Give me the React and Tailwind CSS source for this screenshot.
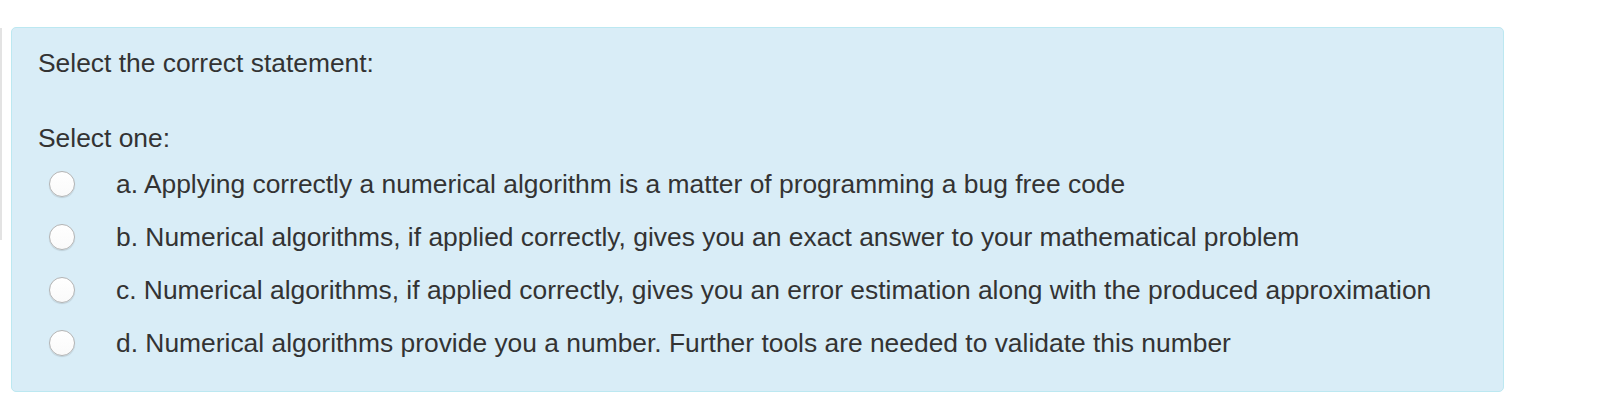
import React from 'react';

const options = [
  'a. Applying correctly a numerical algorithm is a matter of programming a bug free code',
  'b. Numerical algorithms, if applied correctly, gives you an exact answer to your mathematical problem',
  'c. Numerical algorithms, if applied correctly, gives you an error estimation along with the produced approximation',
  'd. Numerical algorithms provide you a number. Further tools are needed to validate this number',
];

const App = () => {
  return (
    <div className="relative w-[1606px] h-[412px] bg-white pt-[27px] pl-[11px]" style={{ fontFamily: '"Liberation Sans", Arial, sans-serif' }}>
      {/* edge of the page column behind the box */}
      <div className="absolute left-0 top-[28px] w-[2px] h-[212px] bg-[#e3e3e3]" />

      <div className="w-[1493px] h-[365px] rounded-[5px] border border-[#bce8f1] bg-[#d9edf7] pt-[18px] pl-[26px] text-[26.4px] text-[#333]">
        <div className="h-[34px] leading-[34px]">Select the correct statement:</div>

        <div className="mt-[41px] h-[34px] leading-[34px]">Select one:</div>

        <div className="mt-[2px] flex flex-col">
          {options.map((text) => (
            <label key={text} className="flex items-center h-[53px] cursor-pointer">
              <span className="ml-[11px] w-[26px] h-[26px] shrink-0 rounded-full border border-[#b4b4b4] bg-gradient-to-b from-white to-[#fafafa] shadow-[0_1px_1px_rgba(0,0,0,0.12)]" />
              <span className="ml-[41px] leading-[34px] whitespace-nowrap">{text}</span>
            </label>
          ))}
        </div>
      </div>
    </div>
  );
};

export default App;
